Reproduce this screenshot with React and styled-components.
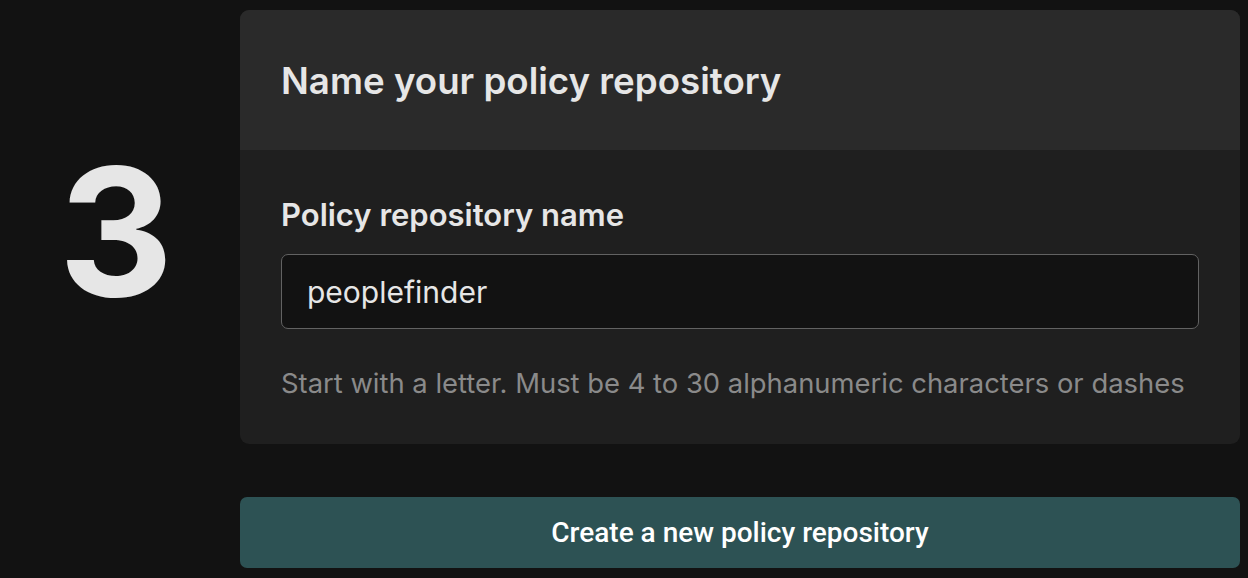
import styled, { createGlobalStyle } from "styled-components";

const GlobalStyle = createGlobalStyle`
  html, body {
    margin: 0;
    background: #121212;
    font-family: Inter, "Noto Sans", sans-serif;
    color: #e6e6e6;
  }
`;

const Page = styled.div`
  display: flex;
  flex-direction: column;
  gap: 53px;
  padding: 10px 8px 10px 0;
  width: 1248px;
  box-sizing: border-box;
`;

const StepRow = styled.div`
  display: grid;
  grid-template-columns: 240px 1fr;
  align-items: center;
`;

const StepNumber = styled.div`
  font-size: 178px;
  font-weight: 700;
  line-height: 1;
  text-align: center;
  color: #e6e6e6;
  padding: 10px 10px 0 0;
  letter-spacing: -2px;
`;

const Card = styled.section`
  background: #1f1f1f;
  border-radius: 9px;
  overflow: hidden;
`;

const CardHeader = styled.header`
  background: #2a2a2a;
  height: 140px;
  display: flex;
  align-items: center;
  padding: 0 41px;
`;

const Title = styled.h2`
  margin: 0;
  font-size: 36.7px;
  font-weight: 600;
`;

const CardBody = styled.div`
  padding: 46px 41px 44px 41px;
  display: flex;
  flex-direction: column;
`;

const Label = styled.label`
  font-size: 31px;
  line-height: 38px;
  font-weight: 600;
  margin-bottom: 20px;
`;

const Input = styled.input`
  height: 75px;
  box-sizing: border-box;
  background: #121212;
  border: 1.5px solid #626262;
  border-radius: 7px;
  padding: 0 25px;
  font-family: Inter, "Noto Sans", sans-serif;
  font-size: 30px;
  color: #e6e6e6;
  outline: none;
`;

const Hint = styled.p`
  margin: 38px 0 0;
  font-size: 27.4px;
  line-height: 33px;
  color: #8a8a8a;
`;

const ButtonRow = styled.div`
  display: grid;
  grid-template-columns: 240px 1fr;
`;

const PrimaryButton = styled.button`
  grid-column: 2;
  height: 71px;
  border: none;
  border-radius: 7px;
  background: #2d5254;
  color: #ffffff;
  font-family: Roboto, "Noto Sans", sans-serif;
  font-weight: 500;
  font-size: 28px;
  cursor: pointer;
`;

export default function App() {
  return (
    <>
      <GlobalStyle />
      <Page>
        <StepRow>
          <StepNumber>3</StepNumber>
          <Card>
            <CardHeader>
              <Title>Name your policy repository</Title>
            </CardHeader>
            <CardBody>
              <Label htmlFor="repo-name">Policy repository name</Label>
              <Input id="repo-name" defaultValue="peoplefinder" />
              <Hint>
                Start with a letter. Must be 4 to 30 alphanumeric characters or
                dashes
              </Hint>
            </CardBody>
          </Card>
        </StepRow>
        <ButtonRow>
          <PrimaryButton>Create a new policy repository</PrimaryButton>
        </ButtonRow>
      </Page>
    </>
  );
}
